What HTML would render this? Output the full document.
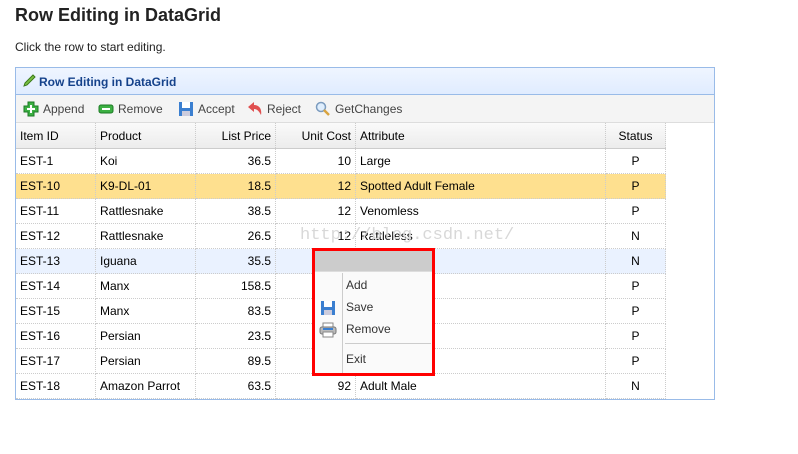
<!DOCTYPE html>
<html><head><meta charset="utf-8"><style>
*{margin:0;padding:0;box-sizing:border-box}
body{width:798px;height:454px;background:#fff;font-family:"Liberation Sans",Arial,sans-serif;font-size:12px;color:#000;position:relative;overflow:hidden}
.a{position:absolute}
h1{position:absolute;left:15px;top:5px;font-size:18px;font-weight:bold;color:#222}
.panel{left:15px;top:67px;width:700px;height:333px;border:1px solid #99bbe8}
.hdr{left:0;top:0;width:698px;height:27px;background:linear-gradient(#eff5ff,#e0ecff);border-bottom:1px solid #99bbe8;font-weight:bold;color:#15428b;font-size:12px}
.tb{left:0;top:27px;width:698px;height:28px;background:#f4f4f4;border-bottom:1px solid #ddd;color:#444;font-size:12px}
.row{position:absolute;left:0;width:650px;height:25px}
.c{position:absolute;top:0;height:25px;line-height:24px;padding:0 4px;border-right:1px dotted #ccc;border-bottom:1px dotted #ccc;white-space:nowrap}
.r{text-align:right}.m{text-align:center}
</style></head><body>
<h1>Row Editing in DataGrid</h1>
<div class="a" style="left:15px;top:40px;font-size:12px;color:#222">Click the row to start editing.</div>
<div class="a panel">
 <div class="a hdr"><svg class="a" style="left:6px;top:6px" width="14" height="14"><path d="M2 12 L3 9 L11 1 L13 3 L5 11 Z" fill="#7bc043" stroke="#3a7a1a"/></svg><span class="a" style="left:23px;top:7px">Row Editing in DataGrid</span></div>
 <div class="a tb">
  <svg class="a" style="left:7px;top:6px" width="16" height="16"><path d="M5 1h6v4h4v6h-4v4H5v-4H1V5h4z" fill="#3cb043" stroke="#1d7a25"/><path d="M8 4v8M4 8h8" stroke="#fff" stroke-width="2"/></svg><span class="a" style="left:27px;top:7px">Append</span>
  <svg class="a" style="left:82px;top:6px" width="16" height="16"><rect x="1" y="4" width="14" height="8" rx="2" fill="#3cb043" stroke="#1d7a25"/><rect x="4" y="7" width="8" height="2" fill="#fff"/></svg><span class="a" style="left:102px;top:7px">Remove</span>
  <svg class="a" style="left:162px;top:6px" width="16" height="16"><rect x="1" y="1" width="14" height="14" fill="#3b7fd0"/><rect x="4" y="1" width="8" height="6" fill="#fff"/><rect x="4" y="10" width="8" height="5" fill="#ccd"/></svg><span class="a" style="left:182px;top:7px">Accept</span>
  <svg class="a" style="left:230px;top:5px" width="18" height="18"><path d="M2 7 L8 2 L8 5 C14 5 16 10 15 15 C13 11 11 9 8 9 L8 12 Z" fill="#e05050"/></svg><span class="a" style="left:251px;top:7px">Reject</span>
  <svg class="a" style="left:299px;top:6px" width="16" height="16"><circle cx="6" cy="6" r="4.5" fill="#dfeefd" stroke="#7c9cbf" stroke-width="1.5"/><path d="M9 9l5 5" stroke="#d9a440" stroke-width="2.5"/></svg><span class="a" style="left:319px;top:7px">GetChanges</span>
 </div>
 <div class="row" style="top:55px;height:26px;background:linear-gradient(#fafafa,#ececec);border-bottom:1px solid #ccc">
  <div class="c" style="left:0;width:80px;border-bottom:0;line-height:26px">Item ID</div><div class="c" style="left:80px;width:100px;border-bottom:0;line-height:26px">Product</div><div class="c r" style="left:180px;width:80px;border-bottom:0;line-height:26px">List Price</div><div class="c r" style="left:260px;width:80px;border-bottom:0;line-height:26px">Unit Cost</div><div class="c" style="left:340px;width:250px;border-bottom:0;line-height:26px">Attribute</div><div class="c m" style="left:590px;width:60px;border-bottom:0;line-height:26px">Status</div>
 </div>
 <div id="rows"></div>
</div>
<script>
var d=[["EST-1","Koi","36.5","10","Large","P"],["EST-10","K9-DL-01","18.5","12","Spotted Adult Female","P"],["EST-11","Rattlesnake","38.5","12","Venomless","P"],["EST-12","Rattlesnake","26.5","12","Rattleless","N"],["EST-13","Iguana","35.5","","","N"],["EST-14","Manx","158.5","","","P"],["EST-15","Manx","83.5","","","P"],["EST-16","Persian","23.5","","","P"],["EST-17","Persian","89.5","","","P"],["EST-18","Amazon Parrot","63.5","92","Adult Male","N"]];
var h="";d.forEach(function(r,i){var bg=i==1?"#fee08f":(i==4?"#eaf2ff":"#fff");h+='<div class="row" style="top:'+(81+i*25)+'px;background:'+bg+'"><div class="c" style="left:0;width:80px">'+r[0]+'</div><div class="c" style="left:80px;width:100px">'+r[1]+'</div><div class="c r" style="left:180px;width:80px">'+r[2]+'</div><div class="c r" style="left:260px;width:80px">'+r[3]+'</div><div class="c" style="left:340px;width:250px">'+r[4]+'</div><div class="c m" style="left:590px;width:60px">'+r[5]+'</div></div>';});
document.getElementById("rows").innerHTML=h;
</script>
<div class="a" style="left:300px;top:226px;font-family:'Liberation Mono',monospace;font-size:17px;color:#d8d8d8">http://blog.csdn.net/</div>
<div class="a" style="left:312px;top:248px;width:123px;height:128px;border:3px solid #f00;background:#fafafa">
 <div class="a" style="left:0;top:0;width:117px;height:21px;background:#ccc;border-bottom:1px solid #ddd"></div>
 <div class="a" style="left:27px;top:22px;width:1px;height:100px;background:#ccc"></div>
 <div class="a" style="left:30px;top:92px;width:86px;height:1px;background:#ccc"></div>
 <span class="a" style="left:31px;top:27px;color:#333">Add</span>
 <span class="a" style="left:31px;top:49px;color:#333">Save</span>
 <span class="a" style="left:31px;top:71px;color:#333">Remove</span>
 <span class="a" style="left:31px;top:101px;color:#333">Exit</span>
 <svg class="a" style="left:5px;top:49px" width="16" height="16"><rect x="1" y="1" width="14" height="14" fill="#3b7fd0"/><rect x="4" y="1" width="8" height="6" fill="#fff"/><rect x="4" y="10" width="8" height="5" fill="#ccd"/></svg>
 <svg class="a" style="left:4px;top:71px" width="18" height="16"><rect x="4" y="1" width="10" height="5" fill="#fff" stroke="#888"/><rect x="1" y="5" width="16" height="7" rx="2" fill="#bbb" stroke="#777"/><rect x="4" y="10" width="10" height="5" fill="#fff" stroke="#888"/><rect x="4" y="6" width="10" height="2" fill="#3b7fd0"/></svg>
</div>
</body></html>
